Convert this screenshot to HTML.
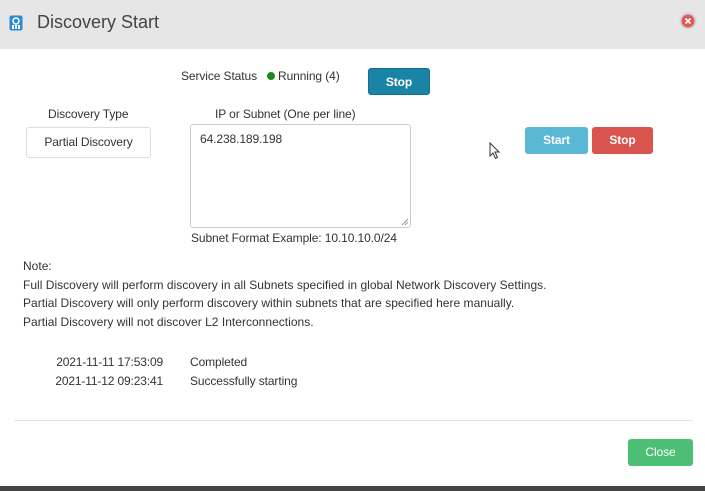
<!DOCTYPE html>
<html><head><meta charset="utf-8"><style>
*{margin:0;padding:0;box-sizing:border-box}
body{width:705px;height:491px;background:#fff;font-family:"Liberation Sans",sans-serif;color:#333;position:relative;overflow:hidden;font-size:12px;letter-spacing:-0.1px}
.abs{position:absolute;white-space:nowrap}
.hdr{position:absolute;left:0;top:0;width:705px;height:49px;background:#e6e6e6}
.btn{position:absolute;border-radius:3px;color:#fff;font-weight:bold;font-size:12px;text-align:center}
</style></head><body>
<div class="hdr"></div>
<svg class="abs" style="left:9px;top:15px" width="14" height="16" viewBox="0 0 14 16"><rect x="0.5" y="0.5" width="13" height="15" rx="2" fill="#2a8ad6"/><circle cx="7" cy="6" r="3" fill="none" stroke="#fff" stroke-width="1.5"/><rect x="3" y="10" width="2" height="4" fill="#fff"/><rect x="6" y="10" width="2" height="4" fill="#fff"/><rect x="9" y="10" width="2" height="4" fill="#fff"/></svg>
<div class="abs" style="left:37px;top:12px;font-size:18px;color:#444;letter-spacing:0">Discovery Start</div>
<svg class="abs" style="left:679px;top:12px" width="18" height="18" viewBox="0 0 18 18"><circle cx="9" cy="9" r="8.5" fill="#d4d4d4"/><circle cx="9" cy="9" r="6.5" fill="#e05a5a"/><path d="M6.5 6.5L11.5 11.5M11.5 6.5L6.5 11.5" stroke="#fff" stroke-width="1.6"/></svg>
<div class="abs" style="left:181px;top:69px">Service Status</div>
<div class="abs" style="left:267px;top:72px;width:8px;height:8px;border-radius:50%;background:#1a8a1a"></div>
<div class="abs" style="left:278px;top:69px">Running (4)</div>
<div class="btn" style="left:368px;top:68px;width:62px;height:27px;line-height:27px;background:#1a84a7;border:1px solid #156f8d">Stop</div>
<div class="abs" style="left:48px;top:107px">Discovery Type</div>
<div class="abs" style="left:26px;top:127px;width:125px;height:31px;border:1px solid #ddd;border-radius:3px;text-align:center;line-height:29px">Partial Discovery</div>
<div class="abs" style="left:215px;top:107px">IP or Subnet (One per line)</div>
<div class="abs" style="left:190px;top:124px;width:221px;height:104px;border:1px solid #ccc;border-radius:3px;padding:7px 9px">64.238.189.198</div>
<svg class="abs" style="left:401px;top:218px" width="8" height="8"><path d="M1 7L7 1M4 7L7 4" stroke="#999"/></svg>
<div class="abs" style="left:191px;top:231px">Subnet Format Example: 10.10.10.0/24</div>
<svg class="abs" style="left:489px;top:142px" width="12" height="18" viewBox="0 0 12 18"><path d="M1 1L1 14L4 11L6.5 16.5L8.5 15.5L6 10L10 10Z" fill="#fff" stroke="#333"/></svg>
<div class="btn" style="left:525px;top:127px;width:63px;height:27px;line-height:27px;background:#5bb8d4">Start</div>
<div class="btn" style="left:592px;top:127px;width:61px;height:27px;line-height:27px;background:#d9534f">Stop</div>
<div class="abs" style="left:23px;top:257px;line-height:18.7px;letter-spacing:0.02px">Note:<br>Full Discovery will perform discovery in all Subnets specified in global Network Discovery Settings.<br>Partial Discovery will only perform discovery within subnets that are specified here manually.<br>Partial Discovery will not discover L2 Interconnections.</div>
<div class="abs" style="left:40px;top:353px;line-height:19px;text-align:right;width:123px;letter-spacing:-0.15px">2021-11-11 17:53:09<br>2021-11-12 09:23:41</div>
<div class="abs" style="left:190px;top:353px;line-height:19px">Completed<br>Successfully starting</div>
<div class="abs" style="left:14px;top:420px;width:679px;height:1px;background:#e5e5e5"></div>
<div class="btn" style="left:628px;top:439px;width:65px;height:27px;line-height:27px;background:#4cbf75;font-weight:normal">Close</div>
<div class="abs" style="left:0;top:486px;width:705px;height:5px;background:#444"></div>
</body></html>
